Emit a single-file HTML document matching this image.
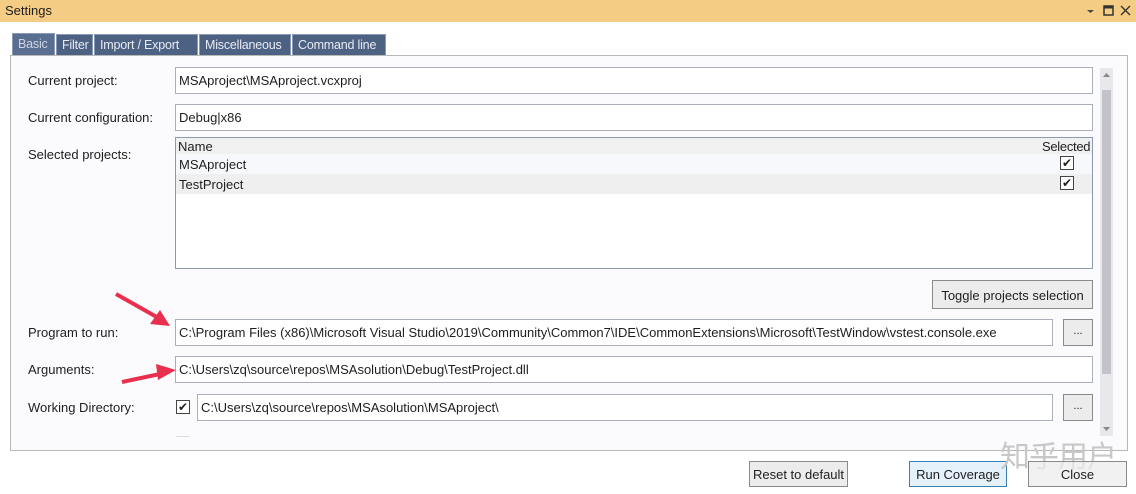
<!DOCTYPE html>
<html><head><meta charset="utf-8"><style>
*{box-sizing:border-box;margin:0;padding:0}
body{width:1136px;height:494px;background:#fff;font-family:"Liberation Sans","Noto Sans CJK SC",sans-serif;font-size:13px;color:#1e1e1e;position:relative;overflow:hidden}
.a{position:absolute}
.title{left:0;top:0;width:1136px;height:22px;background:#f5cc84;padding:3px 5px;font-size:13px}
.tab{top:34px;height:21px;background:#4d6183;color:#e8ecf4;padding:3px 0 0 5px;border:1px solid #8a9ab5;border-bottom:none;font-size:12.5px;white-space:nowrap;letter-spacing:-0.2px}
.panel{left:10px;top:55px;width:1118px;height:396px;border:1px solid #b8b8b8;background:#fbfbfd}
.lbl{left:28px}
.in{background:#fff;border:1px solid #a9b0bb;padding:5px 3px;white-space:nowrap;overflow:hidden}
.btn{background:#ececec;border:1px solid #8a8a8a;text-align:center;padding-top:5px;white-space:nowrap}
.cb{width:14px;height:14px;border:1px solid #444;background:#fff;font-size:12px;line-height:12px;text-align:center}
</style></head><body>
<div class="a title">Settings</div>
<svg class="a" style="left:1084px;top:4px" width="48" height="14"><path d="M3 6h7l-3.5 3z" fill="#444"/><rect x="20" y="2" width="9" height="9" fill="none" stroke="#333" stroke-width="1.5"/><rect x="20" y="2" width="9" height="2.5" fill="#333"/><path d="M37 2l9 9M46 2l-9 9" stroke="#333" stroke-width="1.4"/></svg>
<div class="a tab" style="left:12px;width:43px;top:33px;height:22px;background:#5a6e91;color:#cfd6e3">Basic</div>
<div class="a tab" style="left:56px;width:37px">Filter</div>
<div class="a tab" style="left:94px;width:104px">Import / Export</div>
<div class="a tab" style="left:199px;width:92px">Miscellaneous</div>
<div class="a tab" style="left:292px;width:94px">Command line</div>
<div class="a panel"></div>
<div class="a lbl" style="top:73px">Current project:</div>
<div class="a in" style="left:175px;top:67px;width:918px;height:27px">MSAproject\MSAproject.vcxproj</div>
<div class="a lbl" style="top:110px">Current configuration:</div>
<div class="a in" style="left:175px;top:104px;width:918px;height:27px">Debug|x86</div>
<div class="a lbl" style="top:147px">Selected projects:</div>
<div class="a" style="left:175px;top:137px;width:918px;height:132px;border:1px solid #8c9bb0;background:#fff">
 <div class="a" style="left:0;top:0;width:916px;height:16px;background:#f0f0f0"></div>
 <div class="a" style="left:2px;top:1px">Name</div><div class="a" style="left:866px;top:1px;letter-spacing:-0.3px">Selected</div>
 <div class="a" style="left:0;top:16px;width:916px;height:20px;background:#f6f8fc"></div>
 <div class="a" style="left:3px;top:19px">MSAproject</div>
 <div class="a" style="left:0;top:36px;width:916px;height:20px;background:#efefef"></div>
 <div class="a" style="left:3px;top:39px">TestProject</div>
 <div class="a cb" style="left:884px;top:18px">✔</div>
 <div class="a cb" style="left:884px;top:38px">✔</div>
</div>
<div class="a btn" style="left:932px;top:280px;width:161px;height:29px;padding-top:7px">Toggle projects selection</div>
<div class="a lbl" style="top:325px">Program to run:</div>
<div class="a in" style="left:175px;top:319px;width:878px;height:27px">C:\Program Files (x86)\Microsoft Visual Studio\2019\Community\Common7\IDE\CommonExtensions\Microsoft\TestWindow\vstest.console.exe</div>
<div class="a btn" style="left:1063px;top:319px;width:30px;height:27px;font-size:11px">...</div>
<div class="a lbl" style="top:362px">Arguments:</div>
<div class="a in" style="left:175px;top:356px;width:918px;height:27px">C:\Users\zq\source\repos\MSAsolution\Debug\TestProject.dll</div>
<div class="a lbl" style="top:400px">Working Directory:</div>
<div class="a cb" style="left:176px;top:400px">✔</div>
<div class="a in" style="left:197px;top:394px;width:856px;height:27px">C:\Users\zq\source\repos\MSAsolution\MSAproject\</div>
<div class="a btn" style="left:1063px;top:394px;width:30px;height:27px;font-size:11px">...</div>
<div class="a" style="left:176px;top:436px;width:14px;height:1px;background:#ddd"></div>
<div class="a" style="left:1100px;top:68px;width:13px;height:368px;background:#e8e8ec"></div>
<div class="a" style="left:1102px;top:90px;width:9px;height:284px;background:#c2c3c9"></div>
<svg class="a" style="left:1100px;top:70px" width="13" height="368"><path d="M3 7h7l-3.5-4z" fill="#888"/><path d="M3 357h7l-3.5 4z" fill="#888"/></svg>
<svg class="a" style="left:100px;top:290px" width="90" height="100"><path d="M16 4L62 30" stroke="#e8304e" stroke-width="4"/><path d="M70 36L50 34 60 20z" fill="#e8304e"/><path d="M22 92L60 84" stroke="#e8304e" stroke-width="4"/><path d="M76 80L56 74 58 90z" fill="#e8304e"/></svg>
<div class="a btn" style="left:749px;top:461px;width:99px;height:26px">Reset to default</div>
<div class="a btn" style="left:909px;top:461px;width:98px;height:26px;background:#e5f1fb;border-color:#3c7fb1">Run Coverage</div>
<div class="a" style="left:1000px;top:440px;font-size:30px;line-height:36px;color:#c8c8c8;letter-spacing:-1px">知乎用户</div>
<div class="a btn" style="left:1028px;top:461px;width:99px;height:26px;background:rgba(236,236,236,.75)">Close</div>
</body></html>
